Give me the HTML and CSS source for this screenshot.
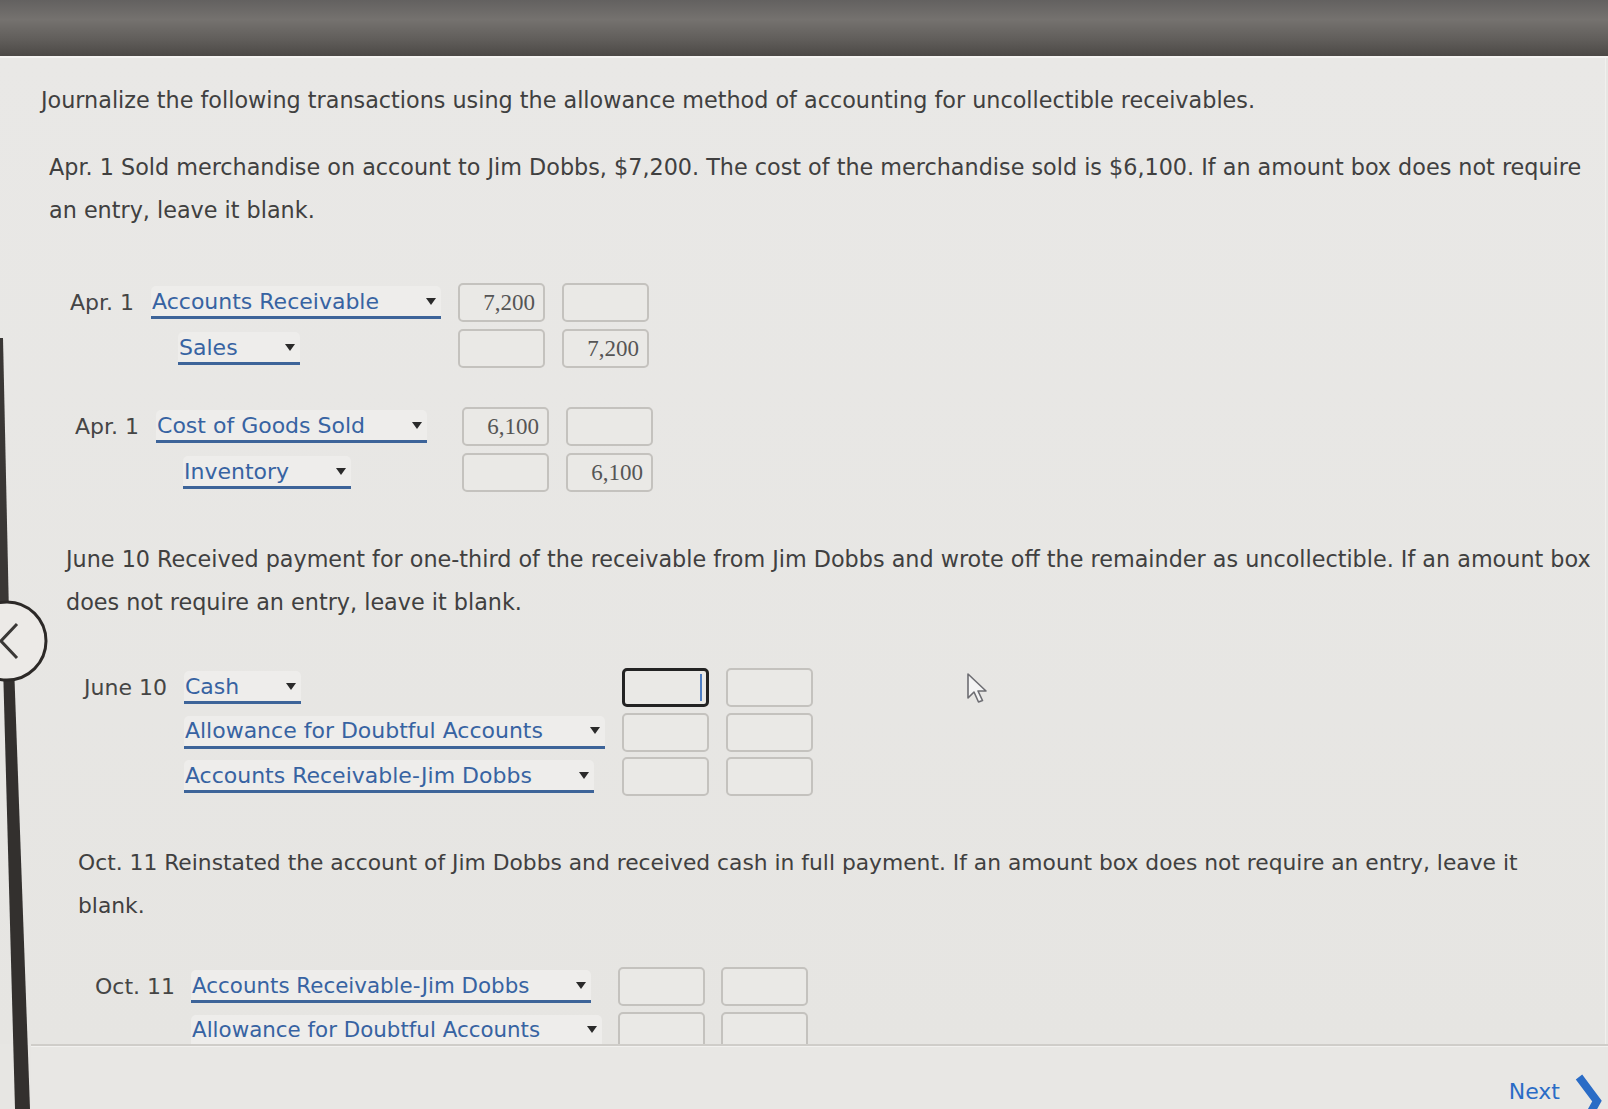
FILE: index.html
```html
<!DOCTYPE html>
<html lang="en">
<head>
<meta charset="utf-8">
<title>Journal entries - allowance method</title>
<link rel="stylesheet" href="styles.css">
</head>
<body>
<div class="screen">
  <header class="topbar"></header>

  <main class="pane">
    <p class="intro">Journalize the following transactions using the allowance method of accounting for uncollectible receivables.</p>

    <section class="q q--1">
      <p class="q__text">Apr. 1 Sold merchandise on account to Jim Dobbs, $7,200. The cost of the merchandise sold is $6,100. If an amount box does not require<br>an entry, leave it blank.</p>

      <div class="journal">
        <span class="journal__date">Apr. 1</span>
        <span class="acct"><span class="acct__text">Accounts Receivable</span><span class="acct__arrow"></span></span>
        <span class="amt">7,200</span>
        <span class="amt"></span>
        <span class="journal__date"></span>
        <span class="acct acct--credit"><span class="acct__text">Sales</span><span class="acct__arrow"></span></span>
        <span class="amt"></span>
        <span class="amt">7,200</span>
      </div>

      <div class="journal">
        <span class="journal__date">Apr. 1</span>
        <span class="acct"><span class="acct__text">Cost of Goods Sold</span><span class="acct__arrow"></span></span>
        <span class="amt">6,100</span>
        <span class="amt"></span>
        <span class="journal__date"></span>
        <span class="acct acct--credit"><span class="acct__text">Inventory</span><span class="acct__arrow"></span></span>
        <span class="amt"></span>
        <span class="amt">6,100</span>
      </div>
    </section>

    <section class="q q--2">
      <p class="q__text">June 10 Received payment for one-third of the receivable from Jim Dobbs and wrote off the remainder as uncollectible. If an amount box<br>does not require an entry, leave it blank.</p>

      <div class="journal">
        <span class="journal__date">June 10</span>
        <span class="acct"><span class="acct__text">Cash</span><span class="acct__arrow"></span></span>
        <span class="amt amt--focus"><span class="amt__caret"></span></span>
        <span class="amt"></span>
        <span class="journal__date"></span>
        <span class="acct"><span class="acct__text">Allowance for Doubtful Accounts</span><span class="acct__arrow"></span></span>
        <span class="amt"></span>
        <span class="amt"></span>
        <span class="journal__date"></span>
        <span class="acct"><span class="acct__text">Accounts Receivable-Jim Dobbs</span><span class="acct__arrow"></span></span>
        <span class="amt"></span>
        <span class="amt"></span>
      </div>
    </section>

    <section class="q q--3">
      <p class="q__text">Oct. 11 Reinstated the account of Jim Dobbs and received cash in full payment. If an amount box does not require an entry, leave it<br>blank.</p>

      <div class="journal">
        <span class="journal__date">Oct. 11</span>
        <span class="acct"><span class="acct__text">Accounts Receivable-Jim Dobbs</span><span class="acct__arrow"></span></span>
        <span class="amt"></span>
        <span class="amt"></span>
        <span class="journal__date"></span>
        <span class="acct"><span class="acct__text">Allowance for Doubtful Accounts</span><span class="acct__arrow"></span></span>
        <span class="amt"></span>
        <span class="amt"></span>
      </div>
    </section>
  </main>

  <footer class="footer">
    <a class="next" href="#">
      <span class="next__label">Next</span>
      <svg class="next__chevron" width="32" height="60" viewBox="0 0 32 60" aria-hidden="true">
        <polyline points="7,3 25,27 10,54" fill="none" stroke="#2a6cc6" stroke-width="8" stroke-linejoin="miter"/>
      </svg>
    </a>
  </footer>

  <svg class="bezel" width="60" height="1109" viewBox="0 0 60 1109" aria-hidden="true">
    <polygon points="0,338 3,338 9,615 0,615" fill="#3a3735"/>
    <polygon points="3,665 14,665 30,1109 15,1109" fill="#33302e"/>
    <circle cx="7" cy="641" r="39" fill="#eceae7" stroke="#2c2927" stroke-width="3"/>
    <polyline points="17,624 1,641 17,658" fill="none" stroke="#3a3836" stroke-width="3"/>
  </svg>

  <svg class="pointer" width="26" height="34" viewBox="0 0 26 34" aria-hidden="true">
    <path d="M2 2 L2 26 L8 20 L12.5 30 L16.5 28.5 L12 19 L20 19 Z" fill="#f4f4f4" stroke="#6d6d72" stroke-width="1.6" stroke-linejoin="round"/>
  </svg>
</div>
</body>
</html>
```

FILE: styles.css
```css
* { box-sizing: border-box; }

html, body {
  margin: 0;
  padding: 0;
  width: 1608px;
  height: 1109px;
  overflow: hidden;
  background: #e7e6e3;
}

.screen {
  position: relative;
  width: 1608px;
  height: 1109px;
  display: flex;
  flex-direction: column;
  font-family: "DejaVu Sans", Verdana, sans-serif;
  color: #404040;
  overflow: hidden;
}

.topbar {
  flex: 0 0 58px;
  background: linear-gradient(to bottom, #636160 0%, #75726f 35%, #615e5b 70%, #4c4946 100%);
  border-bottom: 2px solid #f4f3f1;
}

.pane {
  flex: 0 0 986px;
  width: 1606px;
  overflow: hidden;
  padding: 26px 0 0 41px;
  background: linear-gradient(to bottom, #e9e8e6 0%, #e6e5e2 100%);
  border-right: 1px solid #f1f0ee;
}

.intro {
  margin: 0 0 30px;
  font-size: 22.3px;
  line-height: 32px;
  white-space: nowrap;
}

.q__text {
  margin: 0;
  font-size: 22.3px;
  line-height: 43px;
  white-space: nowrap;
}

.q--1 { padding-left: 8px; }
.q--2 { padding-left: 25px; margin-top: 45px; }
.q--3 { padding-left: 37px; margin-top: 44px; }
.q--3 .q__text { font-size: 21.8px; }

.journal {
  display: grid;
  grid-template-columns: auto minmax(289px, max-content) 87px 87px;
  grid-auto-rows: 41px;
  column-gap: 17px;
  row-gap: 3.5px;
  align-items: center;
  justify-content: start;
  margin: 43px 0 0 18px;
}

.q--1 > .journal { margin-top: 50px; margin-left: 21px; row-gap: 5px; }
.q--1 > .journal + .journal { margin-top: 37px; margin-left: 26px; }
.q--3 > .journal { margin-top: 39px; margin-left: 17px; column-gap: 16px; }

.journal__date {
  font-size: 22px;
  color: #454545;
  white-space: nowrap;
}

.acct {
  justify-self: start;
  display: inline-flex;
  align-items: center;
  height: 33px;
  padding: 0 5px 0 1px;
  background: #eeedeb;
  border-radius: 5px 5px 0 0;
  border-bottom: 3px solid #3d6499;
  color: #3763a2;
  font-size: 22px;
  white-space: nowrap;
}

.q--3 .acct { font-size: 21.4px; }

.acct--credit { margin-left: 27px; }

.acct__text { margin-right: 47px; }

.acct__arrow {
  width: 0;
  height: 0;
  border-left: 5px solid transparent;
  border-right: 5px solid transparent;
  border-top: 7px solid #2a2a2a;
  margin-left: auto;
}

.amt {
  height: 39px;
  display: flex;
  align-items: center;
  justify-content: flex-end;
  padding: 0 8px;
  border: 2px solid #c4c2be;
  border-radius: 5px;
  background: #eae9e6;
  font-family: "Liberation Serif", "Times New Roman", serif;
  font-size: 23px;
  color: #555555;
}

.amt--focus {
  border: 3px solid #232323;
  padding-right: 4px;
}

.amt__caret {
  width: 2px;
  height: 27px;
  background: #4f7fc4;
}

.footer {
  flex: 1 1 auto;
  display: flex;
  justify-content: flex-end;
  align-items: flex-start;
  padding: 28px 4px 0 0;
  margin-left: 31px;
  background: #e8e7e4;
  border-top: 2px solid #cfcdc9;
  box-shadow: inset 0 1px 0 #f2f1ef;
}

.next {
  display: flex;
  align-items: flex-start;
  gap: 12px;
  text-decoration: none;
  color: #2a6cc6;
}

.next__label {
  font-size: 22px;
  line-height: 26px;
  margin-top: 5px;
}

.bezel {
  position: absolute;
  left: 0;
  top: 0;
}

.pointer {
  position: absolute;
  left: 966px;
  top: 672px;
}
```
